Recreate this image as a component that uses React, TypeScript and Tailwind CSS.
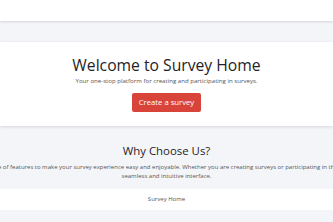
export default function App() {
  return (
    <div className="min-h-[222px] bg-[#f4f5f9] font-['Open_Sans',sans-serif] text-[#1f2326] overflow-hidden">
      {/* navbar */}
      <nav className="h-[21px] bg-white shadow-[0_1px_2px_rgba(0,0,0,0.12)]" />

      <div className="h-[21px]" />

      {/* hero */}
      <section className="bg-white shadow-[0_1px_3px_rgba(0,0,0,0.12)] flex flex-col items-center pt-[12px] pb-[14px]">
        <h1 className="text-[15.7px] leading-[22px] font-medium">Welcome to Survey Home</h1>
        <p className="text-[6.1px] leading-[9px] text-[#555]">
          Your one-stop platform for creating and participating in surveys.
        </p>
        <button className="mt-[8px] h-[19px] w-[69px] rounded-[2px] bg-[#d9443a] text-white text-[7.7px]">
          Create a survey
        </button>
      </section>

      {/* why */}
      <section className="flex flex-col items-center pt-[16px] pb-[8px]">
        <h2 className="text-[11.4px] leading-[18px] font-medium">Why Choose Us?</h2>
        <div className="flex flex-col items-center w-full mt-[2.5px] text-[6px] leading-[9px] text-[#555] whitespace-nowrap">
          <p className="shrink-0">
            We offer a wide range of features to make your survey experience easy and enjoyable. Whether you are creating surveys or participating in them, we will provide a
          </p>
          <p>seamless and intuitive interface.</p>
        </div>
      </section>

      {/* footer */}
      <footer className="bg-white h-[21px] flex items-center justify-center text-[6px] text-[#555]">
        Survey Home
      </footer>
    </div>
  );
}
